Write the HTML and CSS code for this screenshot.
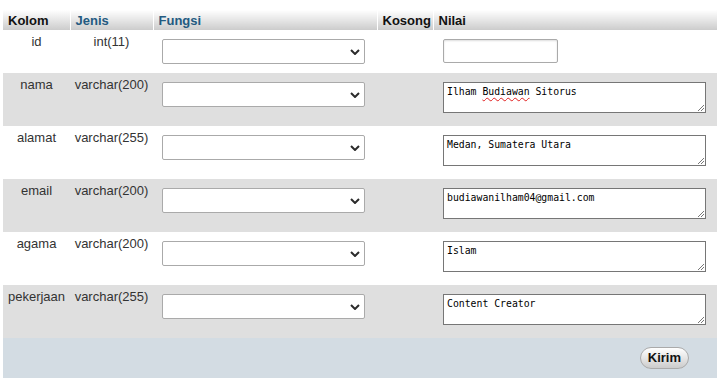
FILE: index.html
```html
<!DOCTYPE html>
<html lang="id">
<head>
<meta charset="utf-8">
<title>Insert</title>
<link rel="stylesheet" href="styles.css">
</head>
<body>
<form class="insert-form">
<table class="insert-table">
  <colgroup>
    <col class="col-kolom">
    <col class="col-jenis">
    <col class="col-fungsi">
    <col class="col-kosong">
    <col class="col-nilai">
  </colgroup>
  <thead>
    <tr>
      <th>Kolom</th>
      <th class="sep"><a class="sort-link" href="#">Jenis</a></th>
      <th class="sep"><a class="sort-link" href="#">Fungsi</a></th>
      <th class="sep">Kosong</th>
      <th class="sep">Nilai</th>
    </tr>
  </thead>
  <tbody>
    <tr class="row">
      <td class="name">id</td>
      <td class="type">int(11)</td>
      <td><div class="select"><span class="chev"><svg width="10" height="6" viewBox="0 0 10 6"><path d="M1 1l4 4 4-4" fill="none" stroke="#2b2b2b" stroke-width="2"/></svg></span></div></td>
      <td></td>
      <td><input class="text-input" type="text"></td>
    </tr>
    <tr class="row alt">
      <td class="name">nama</td>
      <td class="type">varchar(200)</td>
      <td><div class="select"><span class="chev"><svg width="10" height="6" viewBox="0 0 10 6"><path d="M1 1l4 4 4-4" fill="none" stroke="#2b2b2b" stroke-width="2"/></svg></span></div></td>
      <td></td>
      <td><div class="area">Ilham <span class="spell">Budiawan</span> Sitorus<span class="grip"><svg width="7" height="7" viewBox="0 0 7 7"><path d="M1 7L7 1M4 7L7 4" stroke="#777" stroke-width="1"/></svg></span></div></td>
    </tr>
    <tr class="row">
      <td class="name">alamat</td>
      <td class="type">varchar(255)</td>
      <td><div class="select"><span class="chev"><svg width="10" height="6" viewBox="0 0 10 6"><path d="M1 1l4 4 4-4" fill="none" stroke="#2b2b2b" stroke-width="2"/></svg></span></div></td>
      <td></td>
      <td><div class="area">Medan, Sumatera Utara<span class="grip"><svg width="7" height="7" viewBox="0 0 7 7"><path d="M1 7L7 1M4 7L7 4" stroke="#777" stroke-width="1"/></svg></span></div></td>
    </tr>
    <tr class="row alt">
      <td class="name">email</td>
      <td class="type">varchar(200)</td>
      <td><div class="select"><span class="chev"><svg width="10" height="6" viewBox="0 0 10 6"><path d="M1 1l4 4 4-4" fill="none" stroke="#2b2b2b" stroke-width="2"/></svg></span></div></td>
      <td></td>
      <td><div class="area">budiawanilham04@gmail.com<span class="grip"><svg width="7" height="7" viewBox="0 0 7 7"><path d="M1 7L7 1M4 7L7 4" stroke="#777" stroke-width="1"/></svg></span></div></td>
    </tr>
    <tr class="row">
      <td class="name">agama</td>
      <td class="type">varchar(200)</td>
      <td><div class="select"><span class="chev"><svg width="10" height="6" viewBox="0 0 10 6"><path d="M1 1l4 4 4-4" fill="none" stroke="#2b2b2b" stroke-width="2"/></svg></span></div></td>
      <td></td>
      <td><div class="area">Islam<span class="grip"><svg width="7" height="7" viewBox="0 0 7 7"><path d="M1 7L7 1M4 7L7 4" stroke="#777" stroke-width="1"/></svg></span></div></td>
    </tr>
    <tr class="row alt">
      <td class="name">pekerjaan</td>
      <td class="type">varchar(255)</td>
      <td><div class="select"><span class="chev"><svg width="10" height="6" viewBox="0 0 10 6"><path d="M1 1l4 4 4-4" fill="none" stroke="#2b2b2b" stroke-width="2"/></svg></span></div></td>
      <td></td>
      <td><div class="area">Content Creator<span class="grip"><svg width="7" height="7" viewBox="0 0 7 7"><path d="M1 7L7 1M4 7L7 4" stroke="#777" stroke-width="1"/></svg></span></div></td>
    </tr>
  </tbody>
  <tfoot>
    <tr>
      <td class="foot" colspan="5"><button class="btn" type="button">Kirim</button></td>
    </tr>
  </tfoot>
</table>
</form>
</body>
</html>
```

FILE: styles.css
```css
* { box-sizing: border-box; }

html, body {
  margin: 0;
  background: #fff;
}

body {
  padding: 10px 3px 0 3px;
  font-family: "Liberation Sans", Arial, sans-serif;
  font-size: 13px;
  color: #000;
}

.insert-form { margin: 0; }

.insert-table {
  width: 714px;
  border-collapse: collapse;
  table-layout: fixed;
}

.col-kolom { width: 67px; }
.col-jenis { width: 83px; }
.col-fungsi { width: 224px; }
.col-kosong { width: 56px; }
.col-nilai { width: 284px; }

.insert-table th {
  height: 20px;
  padding: 3px 4px 2px 5px;
  line-height: 15px;
  text-align: left;
  font-weight: bold;
  color: #111;
  background: linear-gradient(#ffffff, #cccccc);
  white-space: nowrap;
}

.insert-table th.sep {
  border-left: 1px solid #ffffff;
}

.sort-link {
  color: #235a81;
  text-decoration: none;
}

.insert-table td {
  padding: 4px;
  line-height: 15px;
  vertical-align: top;
  color: #333;
  background: #ffffff;
}

.row.alt td { background: #dfdfdf; }

.insert-table td.name,
.insert-table td.type {
  text-align: center;
  white-space: nowrap;
  padding-left: 2px;
  padding-right: 2px;
}

.select {
  position: relative;
  width: 203px;
  height: 25px;
  margin: 5px 0 0 5px;
  background: #fff;
  border: 1px solid #aaaaaa;
  border-radius: 2px;
}

.chev {
  position: absolute;
  right: 4px;
  top: 9px;
  display: flex;
}

.text-input {
  display: block;
  width: 115px;
  height: 24px;
  margin: 5px 0 6px 6px;
  padding: 2px 4px;
  border: 1px solid #aaaaaa;
  border-radius: 2px;
  background: #fff;
  box-shadow: inset 0 1px 2px #dddddd;
  font: 13px "Liberation Sans", Arial, sans-serif;
}

.area {
  position: relative;
  width: 263px;
  height: 31px;
  margin: 5px 0 9px 6px;
  padding: 3px 3px;
  border: 1px solid #767676;
  background: #fff;
  font-family: "DejaVu Sans Mono", monospace;
  font-size: 9.8px;
  line-height: 12px;
  color: #000;
  white-space: pre;
  overflow: hidden;
}

.spell {
  text-decoration: underline wavy #e02020;
  text-decoration-thickness: 1px;
  text-underline-offset: 2px;
}

.grip {
  position: absolute;
  right: 1px;
  bottom: 1px;
  display: flex;
}

.insert-table td.foot {
  padding: 9px 28px 9px 4px;
  text-align: right;
  background: #d3dce3;
}

.btn {
  height: 22px;
  padding: 0 7px;
  border: 1px solid #aaaaaa;
  border-radius: 11px;
  background: linear-gradient(#ffffff, #cccccc);
  font: bold 13px "Liberation Sans", Arial, sans-serif;
  color: #111;
  line-height: 20px;
  vertical-align: top;
}
```
